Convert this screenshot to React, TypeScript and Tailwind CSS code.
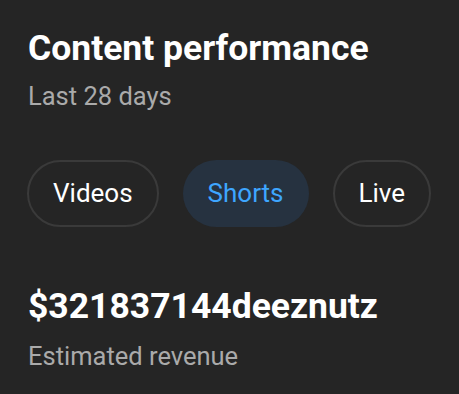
import React from 'react';

const tabs = ['Videos', 'Shorts', 'Live'];

export default function App() {
  const active = 'Shorts';
  return (
    <div className="min-h-screen bg-[#252525] px-[28px] pt-[26px] font-['Roboto',sans-serif]">
      <h1 className="text-[35.5px] font-bold leading-[44px] text-white">Content performance</h1>
      <p className="mt-[10px] text-[25.5px] leading-[32px] text-[#aaaaaa]">Last 28 days</p>

      <div className="-ml-px mt-[48px] flex gap-[24px]">
        {tabs.map((t) => (
          <button
            key={t}
            className={
              t === active
                ? 'h-[67px] rounded-full border-2 border-transparent bg-[#263240] px-[23px] text-[26px] text-[#3ea6ff]'
                : 'h-[67px] rounded-full border-2 border-[#3a3a3a] px-[24px] text-[26px] text-white'
            }
          >
            {t}
          </button>
        ))}
      </div>

      <div className="mt-[57px] text-[35.5px] font-bold leading-[44px] text-white">$321837144deeznutz</div>
      <p className="mt-[12px] text-[25.5px] leading-[32px] text-[#aaaaaa]">Estimated revenue</p>
    </div>
  );
}
